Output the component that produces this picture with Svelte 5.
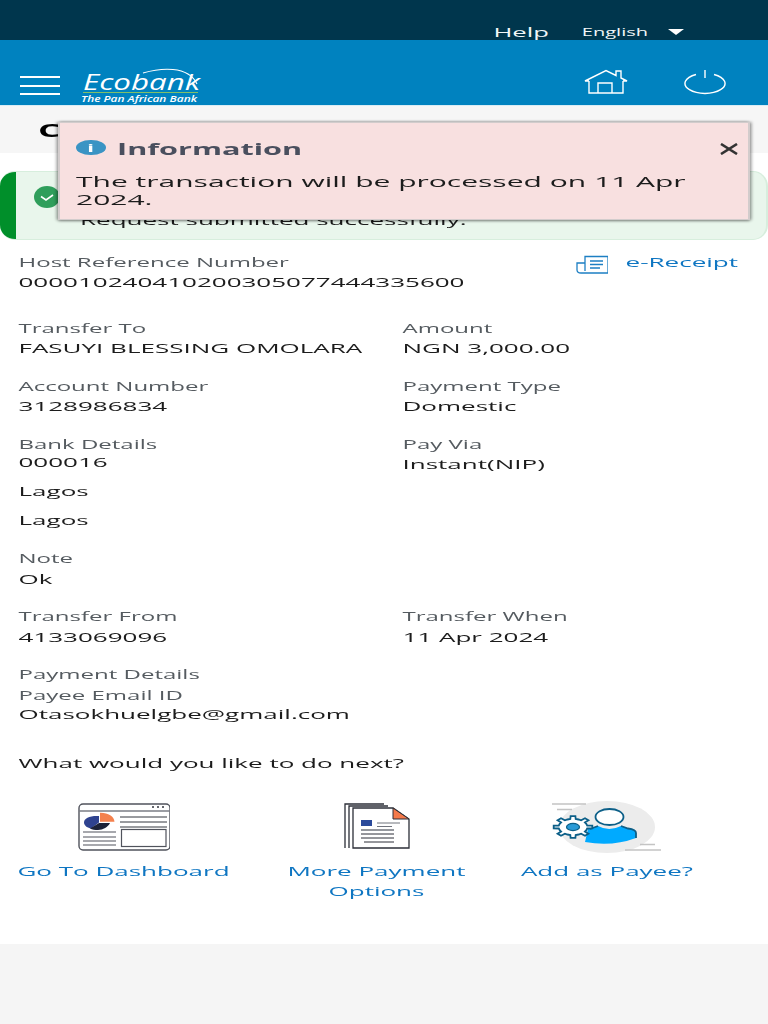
<script>
  const rows = [
    { l: 'Transfer To', v: ['FASUYI BLESSING OMOLARA'], r: 'Amount', rv: 'NGN 3,000.00' },
    { l: 'Account Number', v: ['3128986834'], r: 'Payment Type', rv: 'Domestic' },
    { l: 'Bank Details', v: ['000016', 'Lagos', 'Lagos'], r: 'Pay Via', rv: 'Instant(NIP)', close: true },
    { l: 'Note', v: ['Ok'], loose: true },
    { l: 'Transfer From', v: ['4133069096'], r: 'Transfer When', rv: '11 Apr 2024', loose: true }
  ];

  function gear(cx, cy, rx, ry, n) {
    let d = '';
    const step = (Math.PI * 2) / n;
    for (let i = 0; i < n; i++) {
      const a = i * step;
      const pts = [
        [a - step * 0.5, 0.74],
        [a - step * 0.24, 0.74],
        [a - step * 0.16, 1],
        [a + step * 0.16, 1],
        [a + step * 0.24, 0.74]
      ];
      for (const [t, r] of pts) {
        d += (d ? 'L' : 'M') + (cx + Math.cos(t) * rx * r).toFixed(1) + ' ' + (cy + Math.sin(t) * ry * r).toFixed(1);
      }
    }
    return d + 'Z';
  }
</script>

<div class="page">
  <div class="topbar">
    <span class="help">Help</span>
    <span class="lang">English</span>
    <span class="caret"></span>
  </div>

  <header class="head">
    <div class="burger"><span></span><span></span><span></span></div>
    <svg class="logo" viewBox="0 0 124 38" preserveAspectRatio="none">
      <path d="M63 6C80 1 108 -2 117 17" fill="none" stroke="#fff" stroke-width="1.1" />
      <text x="3" y="23" class="logo-main" textLength="117" lengthAdjust="spacingAndGlyphs">Ecobank</text>
      <path d="M3 25.5H118" stroke="#7fbf6a" stroke-width="1" />
      <text x="1" y="35" class="logo-sub" textLength="116" lengthAdjust="spacingAndGlyphs">The Pan African Bank</text>
    </svg>
    <svg class="home" viewBox="0 0 44 25" preserveAspectRatio="none" fill="none" stroke="#fff" stroke-width="1.4">
      <path d="M5 12H1L22 1.5 32 6.5V2H37V9L43 12H39M5 12V24H39V12M14 24V14H28V24" />
    </svg>
    <svg class="power" viewBox="0 0 42 26" preserveAspectRatio="none" fill="none" stroke="#fff" stroke-width="1.4">
      <path d="M12 5.5A20 10 0 1 0 30 5.5M21 1V9" />
    </svg>
  </header>

  <div class="title">Cash Flow Transfer</div>

  <div class="success">
    <span class="stripe"></span>
    <svg class="check" viewBox="0 0 26 22" preserveAspectRatio="none">
      <ellipse cx="13" cy="11" rx="13" ry="11" fill="#2f9e5b" />
      <path d="M7 10.5L12 14 19 9" fill="none" stroke="#fff" stroke-width="1.6" />
    </svg>
    <span class="success-text">Request submitted successfully.</span>
  </div>

  <main class="content">
    <div class="host">
      <div class="col">
        <div class="label">Host Reference Number</div>
        <div class="value">000010240410200305077444335600</div>
      </div>
      <div class="receipt">
        <svg class="receipt-ico" viewBox="0 0 33 20" preserveAspectRatio="none" fill="none" stroke="#1d7fc3" stroke-width="1.3">
          <path d="M9 16V1.5H32V18H5Q1 18 1 15V8H9M14 6H27M14 9.5H27M14 13H24" />
        </svg>
        <span class="link">e-Receipt</span>
      </div>
    </div>

    {#each rows as row}
      <div class={row.loose ? 'row loose' : 'row'}>
        <div class={row.close ? 'col close-col' : 'col'}>
          <div class="label">{row.l}</div>
          {#each row.v as line, i}
            <div class={i ? 'value extra' : 'value'}>{line}</div>
          {/each}
        </div>
        {#if row.r}
          <div class="col">
            <div class="label">{row.r}</div>
            <div class="value">{row.rv}</div>
          </div>
        {/if}
      </div>
    {/each}

    <div class="col details">
      <div class="label">Payment Details</div>
      <div class="label second">Payee Email ID</div>
      <div class="value tight">Otasokhuelgbe@gmail.com</div>
    </div>

    <div class="next">What would you like to do next?</div>

    <div class="actions">
      <div class="action">
        <svg class="ico-dash" viewBox="0 0 93 48" preserveAspectRatio="none" fill="none">
          <rect x="1" y="1" width="91" height="46" rx="4" stroke="#50535c" stroke-width="1.4" fill="#fff" />
          <path d="M1 8H92" stroke="#7a7c84" stroke-width="1.6" />
          <path d="M74 4h2M79 4h2M84 4h2" stroke="#33363f" stroke-width="1.3" />
          <path d="M21 13C12 12.5 6 15 6 19.5C6 23 10 25 13 25.5L21 19.5Z" fill="#2f4390" />
          <path d="M21 20H32C30 24 25 27 20 27C17 27 14 26.5 12 25.5Z" fill="#1c2238" />
          <path d="M22 9.7C30 9.5 36 13 36.5 18.7H22Z" fill="#f4814e" />
          <path d="M42 14H89M42 19H89M42 24H89" stroke="#33363f" stroke-width="1" />
          <rect x="43.5" y="26.5" width="44.5" height="17" stroke="#50535c" stroke-width="1.2" />
          <path d="M5 29H38M5 34H38M5 38H38M5 42H38" stroke="#50535c" stroke-width="1.1" />
        </svg>
        <span class="link">Go To Dashboard</span>
      </div>
      <div class="action">
        <svg class="ico-docs" viewBox="0 0 67 47" preserveAspectRatio="none" fill="none">
          <path d="M1 45V1H40" stroke="#2c2f38" stroke-width="1.3" />
          <path d="M5 45V3H44" stroke="#2c2f38" stroke-width="1.3" />
          <path d="M9 45V5H49L65 16V45Z" stroke="#2c2f38" stroke-width="1.3" fill="#fff" />
          <path d="M49 5L65 16H49Z" fill="#f4794a" stroke="#2c2f38" stroke-width="1" />
          <rect x="17" y="17" width="11" height="6" fill="#2b4a9b" />
          <path d="M33 20H56M33 23.5H48" stroke="#71747d" stroke-width="1" />
          <path d="M17 27H50" stroke="#71747d" stroke-width="1.3" />
          <path d="M17 31H50M17 35H50M20 39H50" stroke="#2c2f38" stroke-width="1" />
        </svg>
        <span class="link">More Payment Options</span>
      </div>
      <div class="action">
        <svg class="ico-payee" viewBox="0 0 110 54" preserveAspectRatio="none" fill="none">
          <ellipse cx="55" cy="27" rx="48" ry="26" fill="#ececec" />
          <path d="M0 4H34M5 9.5H20M73 50H109M88 44.5H103" stroke="#c4c4c4" stroke-width="1.3" />
          <path d="M33 42Q60 47 84 38V33Q84 29.5 76 28.5L69 26Q57 32 46 26L36 29Z" fill="#00aaff" />
          <path d="M38 29L46 26M69 26L76 28.5Q84 29.5 84 33V38" stroke="#0c5f88" stroke-width="1.8" />
          <ellipse cx="57.5" cy="17" rx="14" ry="8" fill="#fff" stroke="#0c5f88" stroke-width="1.8" />
          <path d={gear(21, 27, 19.5, 11, 8)} fill="#fff" stroke="#0c5f88" stroke-width="1.8" />
          <ellipse cx="21" cy="27" rx="6.5" ry="3.6" fill="#2a9ad6" stroke="#0c5f88" stroke-width="1.2" />
        </svg>
        <span class="link">Add as Payee?</span>
      </div>
    </div>
  </main>

  <div class="foot"></div>

  <div class="toast">
    <button class="close" aria-label="Close">
      <svg class="close-ico" viewBox="0 0 18 12" preserveAspectRatio="none" fill="none" stroke="#333" stroke-width="2.6">
        <path d="M1 1L17 11M17 1L1 11" />
      </svg>
    </button>
    <div class="toast-title"><span class="info">i</span>Information</div>
    <p class="toast-body">The transaction will be processed on 11 Apr 2024.</p>
  </div>
</div>

<style>
  :global(body) {
    margin: 0;
    background: #fff;
    overflow: hidden;
  }
  .page {
    position: relative;
    width: 384px;
    height: 1024px;
    transform: scaleX(2);
    transform-origin: 0 0;
    display: flex;
    flex-direction: column;
    font-family: "Open Sans", "Noto Sans", sans-serif;
    font-size: 13px;
    color: #1c1c1c;
    overflow: hidden;
  }
  svg {
    display: block;
    flex: none;
  }

  .topbar {
    height: 40px;
    flex: none;
    background: #00364d;
    color: #f2f6f8;
    display: flex;
    align-items: flex-end;
    justify-content: flex-end;
    overflow: hidden;
    padding-right: 42.5px;
    box-sizing: border-box;
  }
  .help {
    font-size: 12.8px;
    line-height: 18px;
    margin-bottom: -1px;
    margin-right: 16.5px;
  }
  .lang {
    font-size: 10px;
    line-height: 16px;
    margin-right: 9.5px;
  }
  .caret {
    width: 0;
    height: 0;
    border-left: 4px solid transparent;
    border-right: 4px solid transparent;
    border-top: 6px solid #fff;
    margin-bottom: 5px;
  }

  .head {
    height: 66px;
    flex: none;
    box-sizing: border-box;
    background: #0082bf;
    border-bottom: 1px solid #d8ecf5;
    display: flex;
    align-items: flex-start;
    padding-left: 10px;
  }
  .burger {
    flex: none;
    width: 20px;
    margin-top: 36px;
    display: flex;
    flex-direction: column;
    gap: 6.5px;
  }
  .burger span {
    display: block;
    height: 2px;
    background: #fff;
  }
  .logo {
    width: 62px;
    height: 38px;
    margin: 27px 0 0 10px;
  }
  .logo-main {
    font-family: "Open Sans", sans-serif;
    font-style: italic;
    font-size: 22px;
    fill: #fff;
  }
  .logo-sub {
    font-family: "Open Sans", sans-serif;
    font-style: italic;
    font-weight: 600;
    font-size: 8.5px;
    fill: #fff;
  }
  .home {
    width: 22px;
    height: 25px;
    margin: 29px 0 0 190px;
  }
  .power {
    width: 21px;
    height: 26px;
    margin: 29px 0 0 27.5px;
  }

  .title {
    height: 47px;
    flex: none;
    background: #f6f6f6;
    color: #000;
    font-weight: 700;
    font-size: 18px;
    line-height: 48px;
    padding-left: 19px;
  }

  .success {
    margin-top: 18px;
    height: 69px;
    flex: none;
    box-sizing: border-box;
    position: relative;
    background: #e9f6ec;
    border: 1px solid #d7eedd;
    border-left: 0;
    border-radius: 7.5px / 15px;
    overflow: hidden;
    padding-left: 40px;
  }
  .stripe {
    position: absolute;
    left: 0;
    top: -1px;
    bottom: -1px;
    width: 7.5px;
    background: #008f2a;
  }
  .check {
    position: absolute;
    left: 16.5px;
    top: 14px;
    width: 13px;
    height: 22px;
  }
  .success-text {
    display: block;
    padding-top: 38px;
    line-height: 20px;
  }

  .content {
    padding: 12px 15px 0 9.25px;
    flex: 1;
  }
  .col {
    display: flex;
    flex-direction: column;
    align-items: flex-start;
  }
  .label {
    color: #555b60;
    font-size: 12px;
    line-height: 22px;
    margin-bottom: -2px;
  }
  .label.second {
    margin-top: 1px;
  }
  .value {
    line-height: 20px;
    color: #1c1c1c;
  }
  .value.extra {
    margin-top: 9px;
  }
  .close-col .value:nth-child(2) {
    margin-top: -2px;
  }
  .host {
    display: flex;
    justify-content: space-between;
    margin-bottom: 26px;
  }
  .receipt {
    display: flex;
    align-items: flex-start;
    gap: 8.5px;
    height: 20px;
  }
  .receipt-ico {
    width: 16.5px;
    height: 20px;
    margin-top: 3px;
  }
  .link {
    color: #0f76c2;
    line-height: 20px;
  }
  .row {
    display: grid;
    grid-template-columns: 192px 1fr;
    margin-bottom: 18px;
  }
  .row.loose {
    margin-bottom: 17px;
  }
  .row.loose .value {
    margin-top: 1px;
  }
  .details {
    margin-bottom: 29px;
  }
  .value.tight {
    margin-top: -1px;
  }
  .next {
    line-height: 20px;
    color: #1c1c1c;
  }
  .actions {
    display: grid;
    grid-template-columns: 123.5px 129.5px 101px;
    margin: 30px 0 0 -9.25px;
  }
  .action {
    display: flex;
    flex-direction: column;
    align-items: center;
    text-align: center;
    height: 93px;
  }
  .ico-dash {
    width: 46.5px;
    height: 48px;
    margin-bottom: 10px;
  }
  .ico-docs {
    width: 33.5px;
    height: 47px;
    margin-bottom: 11px;
  }
  .ico-payee {
    width: 55px;
    height: 54px;
    margin: -3px 0 7px;
  }

  .foot {
    height: 80px;
    flex: none;
    background: #f5f5f5;
  }

  .toast {
    position: absolute;
    left: 28.5px;
    top: 122px;
    width: 346px;
    height: 98px;
    box-sizing: border-box;
    background: #f8e0e0;
    border: 1px solid #d2cccc;
    box-shadow: 0 1px 2px rgba(0, 0, 0, 0.3), -1px 0 2px rgba(0, 0, 0, 0.25), 1px 0 2px rgba(0, 0, 0, 0.25);
    padding: 16px 8.5px 0;
  }
  .toast-title {
    display: flex;
    align-items: center;
    font-weight: 700;
    font-size: 15.3px;
    line-height: 20px;
    color: #4a4f5e;
  }
  .info {
    flex: none;
    width: 14.5px;
    height: 15px;
    margin-right: 6px;
    margin-top: -4px;
    border-radius: 50%;
    background: #3a94c4;
    color: #fff;
    font-size: 11px;
    line-height: 15px;
    text-align: center;
  }
  .toast-body {
    margin: 13px 0 0;
    font-size: 15px;
    line-height: 18px;
    color: #1c1c1c;
  }
  .close {
    position: absolute;
    left: 330px;
    top: 20px;
    border: 0;
    padding: 0;
    background: none;
  }
  .close-ico {
    width: 9px;
    height: 12px;
  }
</style>
